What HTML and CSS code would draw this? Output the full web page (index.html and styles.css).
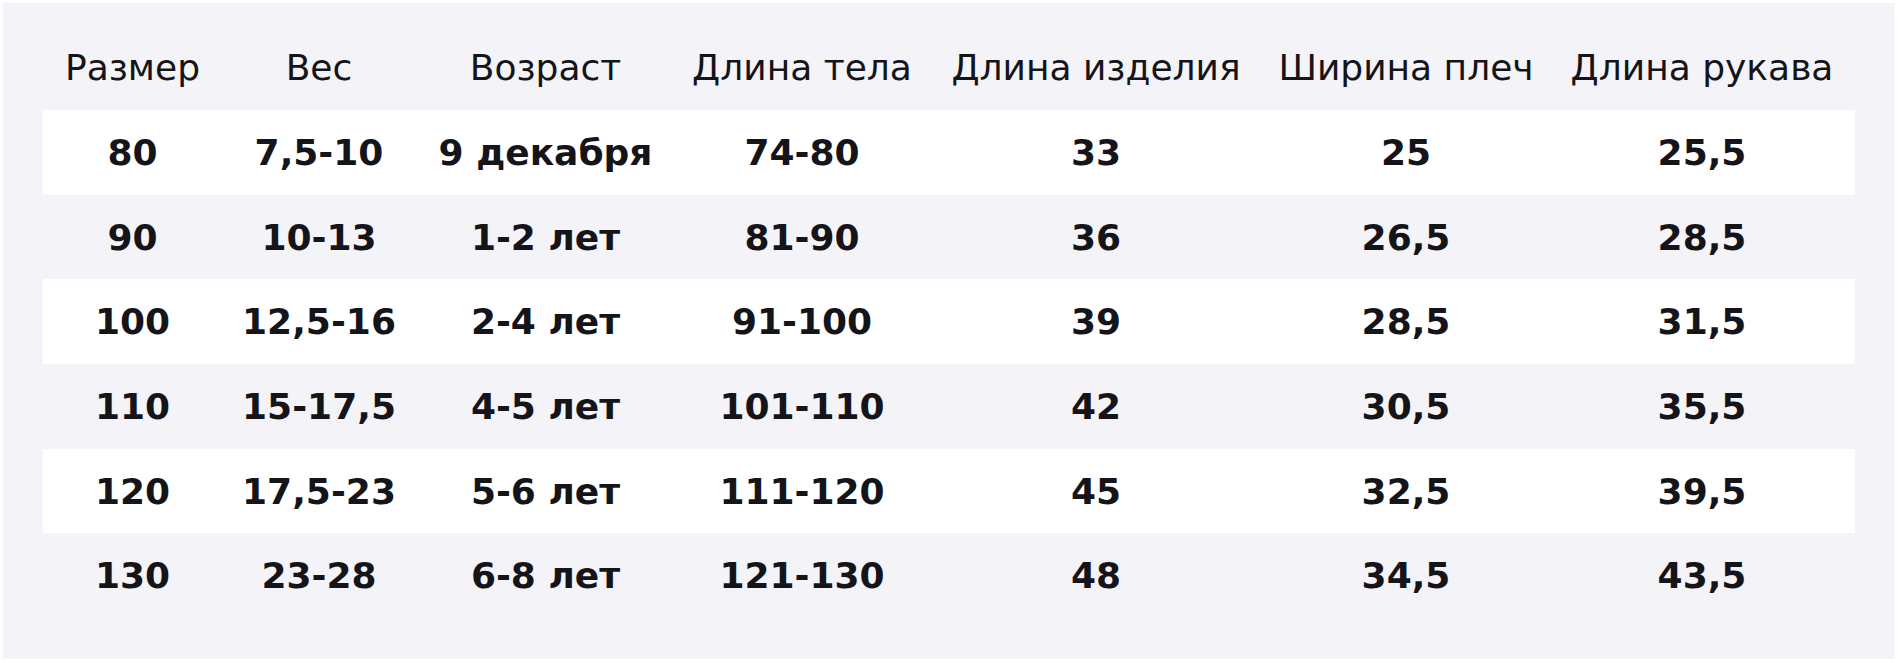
FILE: index.html
```html
<!DOCTYPE html>
<html lang="ru">
<head>
<meta charset="utf-8">
<link rel="stylesheet" href="styles.css">
</head>
<body>
<div class="sheet">
  <table class="sizes">
    <colgroup>
      <col class="c-size"><col class="c-weight"><col class="c-age"><col class="c-body"><col class="c-item"><col class="c-shoulder"><col class="c-sleeve">
    </colgroup>
    <thead>
      <tr>
        <th>Размер</th><th>Вес</th><th>Возраст</th><th>Длина тела</th><th>Длина изделия</th><th>Ширина плеч</th><th>Длина рукава</th>
      </tr>
    </thead>
    <tbody>
      <tr><td>80</td><td>7,5-10</td><td>9 декабря</td><td>74-80</td><td>33</td><td>25</td><td>25,5</td></tr>
      <tr><td>90</td><td>10-13</td><td>1-2 лет</td><td>81-90</td><td>36</td><td>26,5</td><td>28,5</td></tr>
      <tr><td>100</td><td>12,5-16</td><td>2-4 лет</td><td>91-100</td><td>39</td><td>28,5</td><td>31,5</td></tr>
      <tr><td>110</td><td>15-17,5</td><td>4-5 лет</td><td>101-110</td><td>42</td><td>30,5</td><td>35,5</td></tr>
      <tr><td>120</td><td>17,5-23</td><td>5-6 лет</td><td>111-120</td><td>45</td><td>32,5</td><td>39,5</td></tr>
      <tr><td>130</td><td>23-28</td><td>6-8 лет</td><td>121-130</td><td>48</td><td>34,5</td><td>43,5</td></tr>
    </tbody>
  </table>
</div>
</body>
</html>
```
FILE: styles.css
```css
html, body {
  margin: 0;
  padding: 0;
  background: #ffffff;
}
body {
  padding: 3px;
  font-family: "DejaVu Sans", sans-serif;
  color: #141419;
}
.sheet {
  background: #f4f3f8;
  width: 1892px;
  height: 656px;
  box-sizing: border-box;
  padding: 40px 40px 0 40px;
}
.sizes {
  width: 1812px;
  table-layout: fixed;
  border-collapse: collapse;
  border-spacing: 0;
}
.c-size { width: 179px; }
.c-weight { width: 194px; }
.c-age { width: 259px; }
.c-body { width: 254px; }
.c-item { width: 334px; }
.c-shoulder { width: 286px; }
.c-sleeve { width: 306px; }
.sizes th,
.sizes td {
  padding: 0;
  white-space: nowrap;
  text-align: center;
  vertical-align: middle;
  font-size: 36px;
}
.sizes th {
  font-weight: normal;
  line-height: 42px;
  padding: 4px 0 21px;
}
.sizes td {
  font-weight: bold;
  height: 84.7px;
}
.sizes tbody tr:nth-child(odd) {
  background: #ffffff;
}
```
